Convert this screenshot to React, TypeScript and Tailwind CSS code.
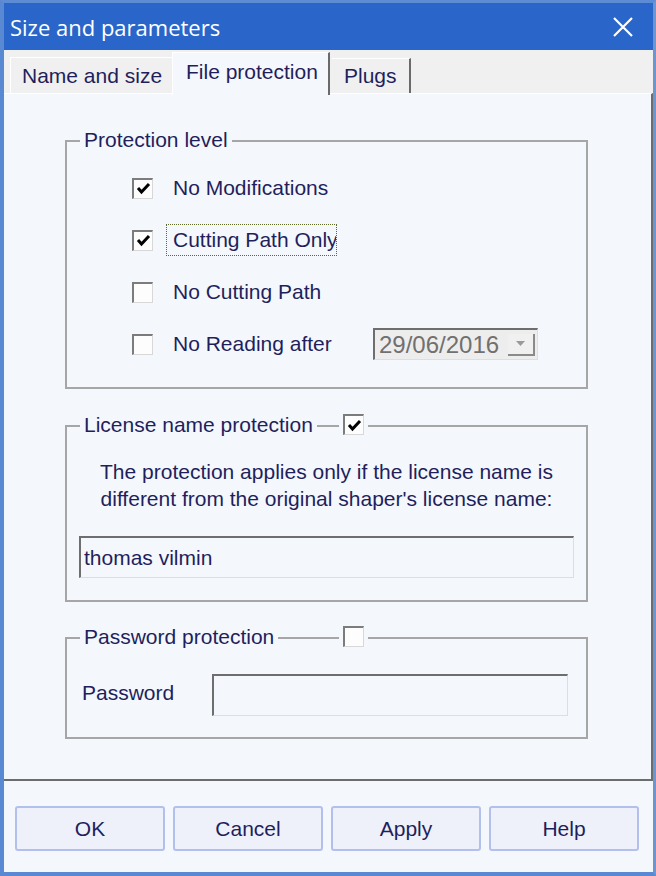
import type { ReactElement, ReactNode } from "react";

const FONT = { fontFamily: '"Liberation Sans", Arial, sans-serif' };

function CheckBox({ checked }: { checked: boolean }): ReactElement {
  return (
    <span className="flex h-[21px] w-[21px] shrink-0 items-center justify-center border-t-2 border-l-2 border-b border-r border-t-[#7c7c7c] border-l-[#7c7c7c] border-b-[#d8d8d8] border-r-[#d8d8d8] bg-[#fdfdfd]">
      {checked && (
        <svg width="15" height="13" viewBox="0 0 15 13">
          <path d="M2 6 L5.5 10 L13 2" fill="none" stroke="#000" strokeWidth="3" />
        </svg>
      )}
    </span>
  );
}

function Group({
  label,
  toggle,
  className,
  children,
}: {
  label: string;
  toggle?: boolean;
  className: string;
  children: ReactNode;
}): ReactElement {
  return (
    <div className={`relative ml-[61px] w-[523px] border-2 border-[#a6a6a6] ${className}`}>
      <span className="absolute -top-[15px] left-[13px] bg-[#f4f7fc] px-[4px] leading-[26px]">
        {label}
      </span>
      {toggle !== undefined && (
        <span className="absolute -top-[13px] left-[272px] bg-[#f4f7fc] px-[4px]">
          <CheckBox checked={toggle} />
        </span>
      )}
      {children}
    </div>
  );
}

function Sunken({ className, children }: { className: string; children?: ReactNode }): ReactElement {
  return (
    <div
      className={`flex items-center border-t-2 border-l-2 border-b border-r border-t-[#6e6e6e] border-l-[#6e6e6e] border-b-[#dedede] border-r-[#dedede] ${className}`}
    >
      {children}
    </div>
  );
}

const rows = [
  { text: "No Modifications", checked: true },
  { text: "Cutting Path Only", checked: true, focus: true },
  { text: "No Cutting Path", checked: false },
  { text: "No Reading after", checked: false, date: true },
];

export default function App(): ReactElement {
  return (
    <div
      className="flex h-[876px] w-[656px] flex-col border-t-[3px] border-l-4 border-r-[3px] border-b-4 border-t-[#5d8bd4] border-l-[#5a89d3] border-r-[#6f95cf] border-b-[#5a89d3] bg-[#2a66c9] text-[21px] text-[#1f1f5c]"
      style={FONT}
    >
      <div className="flex h-[47px] shrink-0 items-center justify-between pl-[6px] pr-[20px]">
        <span
          className="pt-[2px] text-[22px] text-white"
          style={{ fontFamily: '"Open Sans", "Noto Sans", sans-serif' }}
        >
          Size and parameters
        </span>
        <svg width="20" height="20" viewBox="0 0 20 20">
          <path d="M1 1 L19 19 M19 1 L1 19" stroke="#fff" strokeWidth="2.2" />
        </svg>
      </div>

      <div className="flex h-[43px] shrink-0 items-end bg-[#f0f0f0] pl-[6px]">
        <div className="flex h-[36px] w-[162px] items-center border-t border-l border-white pl-[11px]">
          Name and size
        </div>
        <div className="relative z-10 -mb-[2px] flex h-[43px] w-[158px] items-start border-t border-l border-r-2 border-t-white border-l-white border-r-[#6a6a6a] bg-[#f4f7fc] pl-[13px] pt-[3px]">
          File protection
        </div>
        <div className="ml-[2px] flex h-[35px] w-[79px] items-center border-t border-r-2 border-t-white border-r-[#6a6a6a] pl-[12px]">
          Plugs
        </div>
      </div>

      <div className="flex h-[688px] shrink-0 flex-col border-t border-r-2 border-b-2 border-t-white border-r-[#6c6c6c] border-b-[#6c6c6c] bg-[#f4f7fc] pt-[46px]">
        <Group label="Protection level" className="h-[249px] pt-[20px]">
          {rows.map((r) => (
            <div key={r.text} className="flex h-[52px] items-center pl-[65px]">
              <CheckBox checked={r.checked} />
              <span
                className={`ml-[13px] flex h-[32px] items-center overflow-hidden whitespace-nowrap pl-[6px] ${
                  r.focus ? "w-[171px] border border-dotted border-[#5f6a2a]" : "border border-transparent"
                } ${r.date ? "w-[207px]" : ""}`}
              >
                {r.text}
              </span>
              {r.date && (
                <Sunken className="h-[32px] w-[165px] justify-between bg-[#ededed] pl-[4px] pr-[2px]">
                  <span className="text-[24px] leading-none text-[#707070]">29/06/2016</span>
                  <span className="flex h-[22px] w-[27px] items-center justify-center border-b-2 border-r-2 border-[#8a8a8a] bg-[#f0f0f0]">
                    <svg width="9" height="5" viewBox="0 0 9 5">
                      <path d="M0 0 L9 0 L4.5 5 Z" fill="#9a9a9a" />
                    </svg>
                  </span>
                </Sunken>
              )}
            </div>
          ))}
        </Group>

        <Group label="License name protection" toggle className="mt-[36px] h-[177px] px-[12px] pt-[31px]">
          <p className="text-center leading-[27px]">
            The protection applies only if the license name is
            <br />
            different from the original shaper's license name:
          </p>
          <Sunken className="mt-[24px] h-[42px] w-[495px] bg-[#f4f7fc] pl-[3px]">thomas vilmin</Sunken>
        </Group>

        <Group label="Password protection" toggle={false} className="mt-[35px] h-[102px] pl-[15px] pt-[35px]">
          <div className="flex items-start">
            <span className="w-[130px] pt-[3px]">Password</span>
            <Sunken className="h-[42px] w-[356px] bg-[#f4f7fc]" />
          </div>
        </Group>
      </div>

      <div className="flex flex-1 gap-[8px] bg-[#f4f7fc] pl-[11px] pt-[25px]">
        {["OK", "Cancel", "Apply", "Help"].map((b) => (
          <button
            key={b}
            type="button"
            className="flex h-[45px] w-[150px] items-center justify-center rounded-[3px] border-2 border-[#b3c0ee] bg-[#eef1f9] text-[#1f1f5c]"
          >
            {b}
          </button>
        ))}
      </div>
    </div>
  );
}
